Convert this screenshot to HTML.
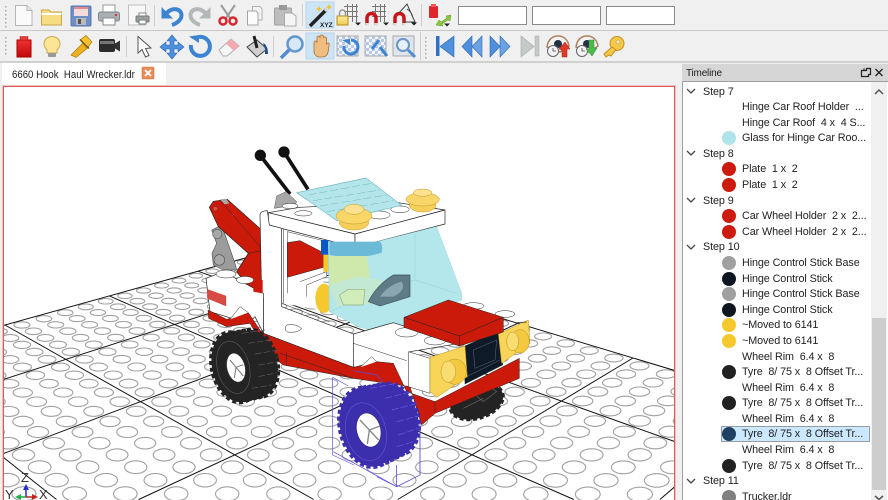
<!DOCTYPE html>
<html><head><meta charset="utf-8">
<style>
html,body{margin:0;padding:0;width:888px;height:500px;overflow:hidden;background:#f0f0f0;font-family:"Liberation Sans",sans-serif;color:#222}
.abs{position:absolute}
#wrap{position:absolute;left:0;top:0;width:888px;height:500px;overflow:hidden}
.inp{position:absolute;top:6px;height:17px;width:67px;background:#fff;border:1px solid #8a8a8a}
.row{position:absolute;left:742px;font-size:10.8px;letter-spacing:-.1px;line-height:14px;white-space:pre;height:14px;color:#222}
.st{position:absolute;left:703px;font-size:10.8px;letter-spacing:-.1px;line-height:14px;white-space:pre;color:#222}
.dot{position:absolute;left:722px;width:14px;height:14px;border-radius:50%}
</style></head>
<body>
<div id="wrap">
<div class="abs" style="left:0;top:30px;width:888px;height:1px;background:#c8c8c8"></div>
<div class="abs" style="left:0;top:61px;width:888px;height:2px;background:#d0d0d0"></div>
<div class="inp" style="left:458px"></div>
<div class="inp" style="left:532px"></div>
<div class="inp" style="left:606px"></div>

<!-- tab -->
<div class="abs" style="left:2px;top:63px;width:164px;height:22px;background:#fff"></div>
<div class="abs" style="left:12px;top:68px;font-size:11.4px;line-height:14px;white-space:pre;color:#222;transform:scaleX(.845);transform-origin:0 0">6660 Hook  Haul Wrecker.ldr</div>

<!-- viewport -->
<div class="abs" style="left:3px;top:86px;width:670px;height:414px;background:#fff;border:1px solid #e4555c;border-bottom:none;box-shadow:0 0 0 1px rgba(232,110,116,.35)"></div>

<svg class="abs" style="left:0;top:0;display:block" width="888" height="500" viewBox="0 0 888 500">
<defs>
<clipPath id="vp"><rect x="4" y="87" width="670" height="413"/></clipPath>
<linearGradient id="gR" x1="0" y1="0" x2="0" y2="1"><stop offset="0" stop-color="#ee3030"/><stop offset="1" stop-color="#c00808"/></linearGradient>
<linearGradient id="gY" x1="0" y1="0" x2="0" y2="1"><stop offset="0" stop-color="#fbe9a0"/><stop offset="1" stop-color="#f2cc50"/></linearGradient>
<pattern id="chk" width="6" height="6" patternUnits="userSpaceOnUse"><rect width="6" height="6" fill="#f2f5fb"/><rect width="3" height="3" fill="#b8c8ea"/><rect x="3" y="3" width="3" height="3" fill="#b8c8ea"/></pattern>
</defs>

<!-- handles -->
<g fill="#aaa"><rect x="5" y="6" width="1.5" height="1.5"/><rect x="5" y="10" width="1.5" height="1.5"/><rect x="5" y="14" width="1.5" height="1.5"/><rect x="5" y="18" width="1.5" height="1.5"/><rect x="5" y="22" width="1.5" height="1.5"/><rect x="5" y="26" width="1.5" height="1.5"/>
<rect x="5" y="37" width="1.5" height="1.5"/><rect x="5" y="41" width="1.5" height="1.5"/><rect x="5" y="45" width="1.5" height="1.5"/><rect x="5" y="49" width="1.5" height="1.5"/><rect x="5" y="53" width="1.5" height="1.5"/>
<rect x="425" y="37" width="1.5" height="1.5"/><rect x="425" y="41" width="1.5" height="1.5"/><rect x="425" y="45" width="1.5" height="1.5"/><rect x="425" y="49" width="1.5" height="1.5"/><rect x="425" y="53" width="1.5" height="1.5"/><rect x="425" y="57" width="1.5" height="1.5"/></g>
<!-- separators -->
<g fill="#cfcfcf"><rect x="154" y="5" width="1" height="21"/><rect x="302" y="4" width="1" height="22"/><rect x="421" y="4" width="1" height="22"/><rect x="126" y="36" width="1" height="21"/><rect x="273" y="36" width="1" height="21"/><rect x="420" y="32" width="1" height="28"/></g>

<!-- ROW 1 -->
<path d="M15.5 5.5H27L32 10.5V25.5H15.5Z" fill="#fafafa" stroke="#b5b5b5"/><path d="M27 5.5V10.5H32" fill="#e5e5e5" stroke="#b5b5b5"/>
<path d="M41.5 25V10H49L51 12H61.5V25Z" fill="#f7dd82" stroke="#c9a648"/><path d="M41.5 14H61.5" stroke="#fff" stroke-width="2"/>
<rect x="71" y="6" width="20" height="20" rx="1" fill="#6c8fc8" stroke="#5376b0"/><rect x="74" y="7" width="14" height="9" fill="#f4dcdc"/><rect x="74" y="7" width="14" height="2" fill="#e88a8a"/><rect x="76" y="18" width="10" height="7" fill="#b9b9b9"/><rect x="78" y="19" width="3" height="5" fill="#555"/>
<rect x="103" y="5" width="12" height="8" fill="#fff" stroke="#999"/><rect x="98.5" y="12" width="21" height="9" rx="2" fill="#a9b0b4" stroke="#7e868a"/><rect x="103" y="18" width="12" height="7" fill="#fff" stroke="#888"/><rect x="115" y="14" width="2" height="2" fill="#d33"/>
<rect x="128.5" y="5" width="17" height="20" fill="#f7f7f7" stroke="#c0c0c0"/><rect x="139" y="13" width="7" height="4" fill="#fff" stroke="#888"/><rect x="136" y="16" width="13" height="6" rx="1" fill="#9a9fa2" stroke="#777"/><rect x="139" y="20" width="7" height="4" fill="#fff" stroke="#777"/>
<path d="M165 15C172 5 184 9 181 18 179 22 175 24 172 25" fill="none" stroke="#3c83d2" stroke-width="4"/><path d="M161.5 7V18.5H173Z" fill="#3c83d2"/>
<path d="M207 15C200 5 188 9 191 18 193 22 197 24 200 25" fill="none" stroke="#b3b7b7" stroke-width="4"/><path d="M210.5 7V18.5H199Z" fill="#b3b7b7"/>
<path d="M221 5L230 18M235 5L226 18" stroke="#9a9a9a" stroke-width="2"/><circle cx="223" cy="21" r="3.5" fill="none" stroke="#d8262a" stroke-width="2.5"/><circle cx="233" cy="21" r="3.5" fill="none" stroke="#d8262a" stroke-width="2.5"/>
<path d="M252.5 6.5H260L262 9V20H252.5Z" fill="#f2f2f2" stroke="#b0b0b0"/><path d="M247.5 11H256L258 13V25H247.5Z" fill="#fcfcfc" stroke="#a5a5a5"/>
<rect x="274.5" y="8" width="17" height="17" rx="1" fill="#bdbdbd" stroke="#a0a0a0"/><rect x="279" y="5" width="8" height="5" fill="#999"/><path d="M284.5 13H292L296 16V26H284.5Z" fill="#f5f5f5" stroke="#aaa"/>

<rect x="306" y="2" width="28" height="26" fill="#cde4f7" stroke="#b7d5ee"/>
<path d="M310 26L326 10" stroke="#222" stroke-width="3.5"/><path d="M325 11L328 8" stroke="#d8d8d8" stroke-width="3"/><path d="M319 6l1 2 2 1-2 1-1 2-1-2-2-1 2-1zM329 4l1 2 2 1-2 1-1 2-1-2-2-1 2-1z" fill="#f0c030"/>
<text x="320" y="27" font-size="6.5" font-weight="bold" fill="#222" font-family="Liberation Sans">XYZ</text>
<g stroke="#777" stroke-width="1" fill="none"><path d="M344 6.5H358M344 11.5H358M344 16.5H358M347.5 4V22M352.5 4V22M356.5 4V22"/><path d="M372 6.5H386M372 11.5H386M372 16.5H386M375.5 4V22M380.5 4V22M384.5 4V22"/></g>
<rect x="337" y="16" width="11" height="9" fill="url(#gY)" stroke="#b58f20"/><path d="M339.5 16V13A3 3 0 0 1 345.5 13V16" fill="none" stroke="#999" stroke-width="1.5"/>
<path d="M355 22.5h6l-3 3zM383 22.5h6l-3 3zM411 22.5h6l-3 3z" fill="#222"/>
<path d="M367 25V18A4.5 4.5 0 0 1 376 18V25" fill="none" stroke="#c8141a" stroke-width="3.5"/><path d="M365.5 23h3.5v2.5h-3.5zM374.5 23h3.5v2.5h-3.5z" fill="#ddd"/>
<path d="M395 25V18A4.5 4.5 0 0 1 404 18V25" fill="none" stroke="#c8141a" stroke-width="3.5"/><path d="M393.5 23h3.5v2.5h-3.5zM402.5 23h3.5v2.5h-3.5z" fill="#ddd"/>
<path d="M399 13L407 4 415 22H404M407 9Q412 12 413 18" fill="none" stroke="#444" stroke-width="1"/>
<rect x="429" y="6" width="9" height="12" rx="1" fill="#e0262c"/><rect x="431" y="4" width="5" height="3" fill="#f05a5a"/>
<path d="M436 25l3-5 2 2 6-4-1-2 5-1-1 6-2-1-6 4 1 2z" fill="#8cc63f" stroke="#5f9a1f" stroke-width=".5"/><path d="M444 23.5h6l-3 3z" fill="#222"/>

<!-- ROW 2 -->
<rect x="17" y="40" width="14" height="17" fill="url(#gR)" stroke="#a00"/><rect x="20" y="36.5" width="8" height="3.5" fill="#e83a3a" stroke="#a22" stroke-width=".5"/>
<path d="M47 50C42 46 43 37 52 36.5 61 37 62 46 57 50V53H47Z" fill="#fbe694" stroke="#c9a84c"/><rect x="48" y="53" width="8" height="4" rx="1" fill="#999"/>
<path d="M71 55L84 42 89 47 76 57.5Z" fill="#eeb020" stroke="#a87a10" stroke-width=".7"/><path d="M80 40L86 35.5 92 42 87 48Z" fill="#f4c030" stroke="#a87a10" stroke-width=".7"/><path d="M80 39.5l9 9" stroke="#6e5008" stroke-width="1.2"/>
<rect x="99" y="39" width="16" height="13" rx="2" fill="#2c2c2c"/><path d="M100 41h14v3H100z" fill="#777"/><path d="M115 43.5l5-3v11l-5-3z" fill="#333"/>
<path d="M138 36.5L138 53 142 49.5 145.5 57 149 55.5 145.5 48.5 151 48Z" fill="#fff" stroke="#555"/>
<path d="M172 35l5 6h-3v4h4v-3l6 5-6 5v-3h-4v4h3l-5 6-5-6h3v-4h-4v3l-6-5 6-5v3h4v-4h-3z" fill="#4f8fdc" stroke="#2a67b5" stroke-width=".6"/>
<path d="M191 45A9.5 9.5 0 1 0 199 37" fill="none" stroke="#3c83d2" stroke-width="4"/><path d="M189 36.5L199 35V43Z" fill="#3c83d2"/>
<path d="M219 50L231 39 239 46 227 56H223Z" fill="#f6f6f6" stroke="#b0b0b0"/><path d="M226 43.5L231 39 239 46 234 51Z" fill="#f4a8b0"/>
<path d="M247 47L257 40 267 49 257 57Z" fill="#d0d0d0" stroke="#444"/><path d="M254 36l3 12" stroke="#222" stroke-width="3"/><path d="M263 43c3 1 5 5 5 11h-3v-5z" fill="#1e4f8f"/>
<circle cx="295" cy="44" r="7.5" fill="#d7e8f8" stroke="#5f96cf" stroke-width="2.5"/><path d="M289 50L281 58" stroke="#4f8cd0" stroke-width="3.5"/>
<rect x="306" y="33" width="28" height="26" fill="#cde4f7" stroke="#b7d5ee"/>
<path d="M314 50V43q0-2 1.5-2t1.5 2V38q0-2 1.5-2t1.5 2v-1q0-2 1.8-2t1.8 2v1q0-1 1.5-1t1.5 2v6q0-2 1.5-2t1 2l-1 7q-1 5-6 5h-3q-3 0-5-4z" fill="#f0bd80" stroke="#a97236" stroke-width=".8"/>
<rect x="337" y="36" width="21" height="20" fill="url(#chk)" stroke="#aaa"/><path d="M344 46A7 7 0 1 0 351 40" fill="none" stroke="#3c83d2" stroke-width="3"/><path d="M342 40l8-1v6z" fill="#3c83d2"/>
<rect x="365" y="36" width="21" height="20" fill="url(#chk)" stroke="#aaa"/><path d="M372 49l7-9M380 47l7 9" stroke="#3c83d2" stroke-width="3"/>
<rect x="393" y="36" width="21" height="20" fill="#dfe5ec" stroke="#aaa"/><circle cx="403" cy="45" r="6" fill="#e5f0fa" stroke="#6b96c6" stroke-width="2"/><path d="M408 50l7 7" stroke="#4f8cd0" stroke-width="3"/>

<rect x="436" y="36" width="3.5" height="20" fill="#2f6fc6"/><path d="M454 36V57L440 46.5Z" fill="#4f8fdc" stroke="#2a67b5" stroke-width=".6"/>
<path d="M472 36V57L462 46.5Z" fill="#4f8fdc" stroke="#2a67b5" stroke-width=".6"/><path d="M482 36V57L472 46.5Z" fill="#6aa2e4" stroke="#2a67b5" stroke-width=".6"/>
<path d="M490 36V57L500 46.5Z" fill="#4f8fdc" stroke="#2a67b5" stroke-width=".6"/><path d="M500 36V57L510 46.5Z" fill="#6aa2e4" stroke="#2a67b5" stroke-width=".6"/>
<path d="M521 36V57L534 46.5Z" fill="#c5c9c9" stroke="#a5a9a9" stroke-width=".6"/><rect x="535" y="36" width="4" height="20" fill="#c5c9c9" stroke="#a5a9a9" stroke-width=".5"/>

<path d="M547 47C548 39 553 36 558 36 564 36 568 40 569 46L560 52Z" fill="#f4f4f4" stroke="#b08060" stroke-width="1.5"/><circle cx="558" cy="44" r="4" fill="#234"/><circle cx="553" cy="51" r="5.5" fill="#f5f5f5" stroke="#666"/><path d="M553 48v3h3" stroke="#444" fill="none" stroke-width=".8"/><path d="M565 42l5 7h-3v8h-5v-7l-3-1z" fill="#e23a28" stroke="#a81a10" stroke-width=".5"/>
<path d="M576 47C577 39 582 36 587 36 593 36 597 40 598 46L589 52Z" fill="#f4f4f4" stroke="#b08060" stroke-width="1.5"/><circle cx="587" cy="44" r="4" fill="#234"/><circle cx="582" cy="51" r="5.5" fill="#f5f5f5" stroke="#666"/><path d="M582 48v3h3" stroke="#444" fill="none" stroke-width=".8"/><path d="M589 40h5v8h3l-5 8-6-7h3z" fill="#4dbb4a" stroke="#2f8a2f" stroke-width=".5"/>
<circle cx="617" cy="43.5" r="7" fill="#f5c948" stroke="#c28f22"/><circle cx="618" cy="42" r="2" fill="#f7ecc0" stroke="#c28f22" stroke-width=".6"/><path d="M612 47L604 54 606 57 609 55 611 56 614 52 616 50Z" fill="#f5c948" stroke="#c28f22"/>

<!-- close tab -->
<rect x="142" y="67" width="12" height="12" rx="1.5" fill="#ea8a58" stroke="#d8703a" stroke-width=".6"/><path d="M145 70l6 6m0-6l-6 6" stroke="#fff" stroke-width="1.8"/>

<!-- VIEWPORT -->
<g clip-path="url(#vp)">
<g id="floor"></g>
<g id="lines" stroke="#111" stroke-width="1" fill="none"></g>

<g transform="translate(180 130) scale(.33333)" stroke-linejoin="round">
<!-- far wheel -->
<ellipse cx="890" cy="815" rx="82" ry="50" transform="rotate(-18 890 815)" fill="#232323" stroke="#232323" stroke-width="10" stroke-dasharray="12 8"/>
<path d="M880 790l40-25 30 20-40 30zM850 835l60-30" stroke="#666" stroke-width="2" fill="none"/>
<!-- hinge gray -->
<path d="M95 300L125 285 165 400 170 420 130 420 100 405 96 370 110 340Z" fill="#9c9c9c" stroke="#555" stroke-width="2"/>
<circle cx="112" cy="312" r="14" fill="#a8a8a8" stroke="#555" stroke-width="2"/><circle cx="118" cy="390" r="16" fill="#a8a8a8" stroke="#555" stroke-width="2"/>
<!-- boom -->
<path d="M88 232L100 214 142 208 245 300V470L220 490 170 425 205 370 115 290Z" fill="#cc1a0a" stroke="#222" stroke-width="2"/>
<path d="M122 212L240 350M170 425L205 370 245 362" fill="none" stroke="#222" stroke-width="1.5"/>
<circle cx="106" cy="236" r="7" fill="#e05040" stroke="#222" stroke-width="1"/>
<path d="M120 208l18-2 10 14-14 3z" fill="#aaa"/>
<!-- sticks -->
<path d="M242 78L330 192M312 66L384 178" stroke="#111" stroke-width="11"/>
<circle cx="241" cy="76" r="17" fill="#111"/><circle cx="312" cy="66" r="17" fill="#111"/>
<path d="M283 235L290 198 318 185 350 215 345 225Z" fill="#a8a8a8" stroke="#555" stroke-width="1.5"/>
<!-- window interior -->
<path d="M305 290L430 325V540L305 520Z" fill="#fff"/>
<path d="M322 338L360 332 430 368V412L322 442Z" fill="#cc1a0a" stroke="#222" stroke-width="1.5"/>
<path d="M322 305L430 332M322 305V490M360 455L440 425 440 440 380 465M380 465V500" stroke="#333" stroke-width="1.5" fill="#fff"/>
<!-- roof -->
<path d="M265 248L360 232 655 218 795 240 525 312Z" fill="#fff" stroke="#222" stroke-width="2"/>
<path d="M265 248L525 312V352L265 285Z" fill="#fff" stroke="#222" stroke-width="2"/>
<path d="M525 312L795 240V282L525 352Z" fill="#fff" stroke="#222" stroke-width="2"/>
<g fill="#fff" stroke="#222" stroke-width="1.5"><ellipse cx="598" cy="255" rx="32" ry="12"/><ellipse cx="660" cy="238" rx="28" ry="10"/><ellipse cx="330" cy="228" rx="24" ry="8"/><ellipse cx="370" cy="250" rx="26" ry="8"/></g>
<!-- glass top -->
<path d="M350 188L558 144 665 226 470 272 400 222Z" fill="#b4e5ea" stroke="#6fb7c0" stroke-width="2"/>
<path d="M385 195L575 160M400 212L600 180M420 228L620 195M440 245L640 212" stroke="#6fb7c0" stroke-width="1.5" fill="none" stroke-dasharray="25 8"/>
<!-- gold studs -->
<g stroke="#c49a28" stroke-width="1.5">
<ellipse cx="522" cy="278" rx="44" ry="22" fill="#f6cf5a"/>
<ellipse cx="522" cy="258" rx="54" ry="24" fill="#f8d768"/>
<ellipse cx="522" cy="238" rx="30" ry="15" fill="#fbe190"/>
<ellipse cx="728" cy="226" rx="40" ry="20" fill="#f6cf5a"/>
<ellipse cx="728" cy="208" rx="50" ry="20" fill="#f8d768"/>
<ellipse cx="728" cy="188" rx="28" ry="11" fill="#fbe190"/>
</g>
<!-- pillar + body -->
<path d="M240 255Q240 243 262 242L268 285 305 295V530L520 612V712L250 610V505L245 500Z" fill="#fff" stroke="#222" stroke-width="2"/>
<path d="M310 298V522M305 520L448 575" stroke="#222" stroke-width="1.5" fill="none"/>
<path d="M320 585Q350 580 365 596 352 610 322 606Q310 598 320 585Z" fill="#fff" stroke="#222" stroke-width="1.5"/>
<!-- rear bed -->
<path d="M78 445L130 425 250 490V610L225 560 205 580 90 545Z" fill="#fff" stroke="#222" stroke-width="2"/>
<path d="M82 478L138 498V528L82 505Z" fill="#d84a44" stroke="#b33" stroke-width="1"/>
<path d="M84 540L140 568 205 548 240 600 250 612V650L210 580 140 590 86 565Z" fill="#cc1a0a" stroke="#222" stroke-width="1.5"/>
<path d="M150 568L180 530 205 548" fill="#fff" stroke="#222" stroke-width="1.5"/>
<g fill="#fff" stroke="#222" stroke-width="1.5"><ellipse cx="138" cy="432" rx="30" ry="12"/><ellipse cx="195" cy="450" rx="26" ry="11"/></g>
<path d="M220 450H248V490L220 485Z" fill="#cc1a0a"/>
<!-- seat area / driver -->
<ellipse cx="432" cy="505" rx="26" ry="44" fill="#f5c92e"/>
<path d="M430 372H446V425H430Z" fill="#f5c92e"/>
<rect x="423" y="330" width="23" height="44" fill="#0b57c4"/>
<!-- glass cabin -->
<path d="M445 335L525 352 770 290 845 490V510L690 565 640 618 540 592 448 545Z" fill="#b4e7eb" stroke="#9ad8de" stroke-width="1.5"/>
<path d="M705 310V450L830 490M705 450L560 495M450 545L560 495" stroke="#96d6dc" stroke-width="2" fill="none"/>
<path d="M448 335H600Q610 345 605 368 540 390 448 375Z" fill="#6bbad8"/>
<path d="M450 378H560L570 440 530 470 450 465Z" fill="#cfe9ad"/>
<path d="M450 465L530 440 610 450 580 520 470 530Z" fill="#c4e9d2"/>
<path d="M478 495L505 478H555L550 525H490Z" fill="#d0ecb8" stroke="#8faf88" stroke-width="2"/>
<path d="M565 515Q590 465 640 435L690 435 690 500 600 528Z" fill="#5f7b86" stroke="#3a525c" stroke-width="2"/>
<path d="M600 500Q625 465 665 455 680 480 640 500Z" fill="#8aa6b0"/>
<!-- hood -->
<path d="M520 612L640 578 840 640 690 665 685 790 520 710Z" fill="#fff" stroke="#222" stroke-width="2"/>
<path d="M520 640L680 692" stroke="#222" stroke-width="1.5"/>
<g fill="#fff" stroke="#222" stroke-width="1.5"><ellipse cx="680" cy="607" rx="34" ry="14"/><ellipse cx="765" cy="632" rx="32" ry="13"/><ellipse cx="880" cy="528" rx="32" ry="10"/><ellipse cx="975" cy="552" rx="30" ry="10"/></g>
<!-- lower red -->
<path d="M250 610L520 712 590 695 640 700 680 785 765 815 1018 685V745L765 850 725 885 690 770 520 745 310 705 250 660Z" fill="#cc1a0a" stroke="#222" stroke-width="1.5"/>
<path d="M300 670L520 745M320 668V705M765 815V850M540 712L575 680 590 695" stroke="#222" stroke-width="1.5" fill="#fff"/>
<path d="M685 665L750 685V790L685 770Z" fill="#fff" stroke="#222" stroke-width="1.5"/>
<!-- grille -->
<path d="M850 650L968 598V705L855 762Z" fill="#0e1a28" stroke="#111"/>
<path d="M880 660L950 630 945 690 885 715ZM860 740L960 690" stroke="#5c6b78" stroke-width="1.5" fill="none"/>
<!-- yellow lamps -->
<path d="M750 682L855 648 862 740 770 802 750 785Z" fill="#f8d458" stroke="#b89020" stroke-width="1.5"/>
<ellipse cx="825" cy="725" rx="34" ry="38" fill="#f4c93f" stroke="#b89020" stroke-width="1.5"/><ellipse cx="805" cy="725" rx="22" ry="32" fill="#f9dc72" stroke="#b89020" stroke-width="1.5"/>
<path d="M955 612L1045 570 1050 640 965 700Z" fill="#f8d458" stroke="#b89020" stroke-width="1.5"/>
<ellipse cx="1020" cy="634" rx="28" ry="35" fill="#f4c93f" stroke="#b89020" stroke-width="1.5"/><ellipse cx="998" cy="634" rx="18" ry="28" fill="#f9dc72" stroke="#b89020" stroke-width="1.5"/>
<path d="M1012 578l28-2" stroke="#333" stroke-width="2.5"/>
<!-- red plate -->
<path d="M672 562L805 510 970 562 838 618Z" fill="#cc1a0a" stroke="#222" stroke-width="1.5"/>
<path d="M672 562L838 618V648L672 592Z" fill="#cc1a0a" stroke="#222" stroke-width="1.5"/>
<path d="M838 618L970 562V606L838 648Z" fill="#cc1a0a" stroke="#222" stroke-width="1.5"/>

<!-- rear wheel -->
<g fill="#242424" stroke="#242424" stroke-width="14" stroke-dasharray="12 8">
<ellipse cx="225" cy="700" rx="66" ry="102" transform="rotate(-14 225 700)"/>
<ellipse cx="210" cy="703" rx="66" ry="102" transform="rotate(-14 210 703)"/>
<ellipse cx="195" cy="706" rx="66" ry="102" transform="rotate(-14 195 706)"/>
<ellipse cx="180" cy="709" rx="66" ry="102" transform="rotate(-14 180 709)"/>
<ellipse cx="165" cy="712" rx="68" ry="106" transform="rotate(-14 165 712)"/>
</g>
<path d="M185 610L255 600M205 640L285 628M225 672L295 660M235 705L295 695M235 740L290 728M215 775L275 765" stroke="#5a5a5a" stroke-width="2" stroke-dasharray="20 6" fill="none"/>
<ellipse cx="160" cy="712" rx="48" ry="80" transform="rotate(-14 160 712)" fill="none" stroke="#666" stroke-width="1.5"/>
<ellipse cx="168" cy="713" rx="27" ry="44" transform="rotate(-14 168 713)" fill="#fff" stroke="#444" stroke-width="1.5"/>
<path d="M150 690l18 22 22-8M168 712l-5 32M168 712l22 26" stroke="#777" stroke-width="3" fill="none"/>

<!-- front wheel (selected) -->
<g fill="none" stroke="#5a4be0" stroke-width="2">
<path d="M458 742V975L522 1005M458 742L505 768M520 722L590 735 720 880V960M650 1005V1070L460 965M720 960V1035L650 1070"/>
</g>
<g fill="#3c2fad" stroke="#3c2fad" stroke-width="14" stroke-dasharray="12 8">
<ellipse cx="640" cy="868" rx="74" ry="108" transform="rotate(-14 640 868)"/>
<ellipse cx="621" cy="874" rx="76" ry="111" transform="rotate(-14 621 874)"/>
<ellipse cx="602" cy="880" rx="78" ry="114" transform="rotate(-14 602 880)"/>
<ellipse cx="583" cy="886" rx="80" ry="117" transform="rotate(-14 583 886)"/>
<ellipse cx="563" cy="892" rx="82" ry="120" transform="rotate(-14 563 892)"/>
</g>
<path d="M570 775L650 760M615 805L695 785M635 840L712 820M650 875L715 858M655 915L715 895M650 950L700 935" stroke="#6a5ce8" stroke-width="2" stroke-dasharray="22 6" fill="none"/>
<ellipse cx="558" cy="905" rx="60" ry="88" transform="rotate(-14 558 905)" fill="none" stroke="#6a5ce8" stroke-width="1.5"/>
<ellipse cx="566" cy="900" rx="36" ry="52" transform="rotate(-14 566 900)" fill="#fff" stroke="#2a2080" stroke-width="2"/>
<path d="M540 870l28 30 32-12M568 900l-6 42M568 900l28 30" stroke="#888" stroke-width="4" fill="none"/>
<g fill="none" stroke="#5a4be0" stroke-width="2"><path d="M650 1005V1070M720 960V1035L650 1070 590 1040M720 880V960"/></g>
</g>

<!-- axes -->
<g font-family="Liberation Sans" font-size="13" fill="#333">
<text x="21" y="482">Z</text><text x="5" y="499">Y</text><text x="39" y="499">X</text></g>
<path d="M26 497V488" stroke="#2030d0" stroke-width="1.5"/><path d="M26 484l3 6h-6z" fill="#2030d0"/>
<path d="M26 497H33" stroke="#c02020" stroke-width="1.5"/><path d="M38 497l-6-3v6z" fill="#c82020"/>
<path d="M26 497H20" stroke="#20a040" stroke-width="1.5"/><path d="M15 497l6-3v6z" fill="#20b050"/>
</g>

<!-- timeline header icons -->
<rect x="682" y="64" width="206" height="17" fill="#d6d6d6"/>
<rect x="682" y="81" width="206" height="419" fill="#a0a0a0"/>
<rect x="683" y="82" width="205" height="418" fill="#fff"/>
<rect x="871" y="82" width="16" height="418" fill="#f0f0f0"/>
<rect x="872" y="318" width="14" height="172" fill="#cdcdcd"/>
<path d="M875 94l4-4 4 4M875 496l4 3.5 4-3.5" fill="none" stroke="#555" stroke-width="1.5"/>
<path d="M861.5 70.5h5v-2h4v6h-2v2h-7zM864 70.5v-2" fill="none" stroke="#222" stroke-width="1.2"/>
<path d="M875.5 69l7 7m0-7l-7 7" stroke="#222" stroke-width="1.3"/>
<!-- selection -->
<rect x="721.5" y="426.5" width="148" height="15" fill="#cce8ff" stroke="#444" stroke-width="1" stroke-dasharray="1 1"/>
<!-- chevrons -->
<g fill="none" stroke="#444" stroke-width="1.3">
<path d="M687 89l4 4 4-4M687 151l4 4 4-4M687 198l4 4 4-4M687 245l4 4 4-4M687 479l4 4 4-4"/>
</g>
</svg>

<div class="abs" style="left:686px;top:67px;font-size:10px;letter-spacing:-.2px;line-height:13px;color:#222">Timeline</div>

<div class="st" style="top:85px">Step 7</div>
<div class="row" style="top:100px">Hinge Car Roof Holder  ...</div>
<div class="row" style="top:116px">Hinge Car Roof  4 x  4 S...</div>
<div class="dot" style="top:131px;background:#aee3ea"></div><div class="row" style="top:131px">Glass for Hinge Car Roo...</div>
<div class="st" style="top:147px">Step 8</div>
<div class="dot" style="top:162px;background:#cc1a0e"></div><div class="row" style="top:162px">Plate  1 x  2</div>
<div class="dot" style="top:178px;background:#cc1a0e"></div><div class="row" style="top:178px">Plate  1 x  2</div>
<div class="st" style="top:194px">Step 9</div>
<div class="dot" style="top:209px;background:#cc1a0e"></div><div class="row" style="top:209px">Car Wheel Holder  2 x  2...</div>
<div class="dot" style="top:225px;background:#cc1a0e"></div><div class="row" style="top:225px">Car Wheel Holder  2 x  2...</div>
<div class="st" style="top:240px">Step 10</div>
<div class="dot" style="top:256px;background:#a0a0a0"></div><div class="row" style="top:256px">Hinge Control Stick Base</div>
<div class="dot" style="top:272px;background:#0e1620"></div><div class="row" style="top:272px">Hinge Control Stick</div>
<div class="dot" style="top:287px;background:#a0a0a0"></div><div class="row" style="top:287px">Hinge Control Stick Base</div>
<div class="dot" style="top:303px;background:#0e1620"></div><div class="row" style="top:303px">Hinge Control Stick</div>
<div class="dot" style="top:318px;background:#f5c92e"></div><div class="row" style="top:318px">~Moved to 6141</div>
<div class="dot" style="top:334px;background:#f5c92e"></div><div class="row" style="top:334px">~Moved to 6141</div>
<div class="row" style="top:350px">Wheel Rim  6.4 x  8</div>
<div class="dot" style="top:365px;background:#222"></div><div class="row" style="top:365px">Tyre  8/ 75 x  8 Offset Tr...</div>
<div class="row" style="top:381px">Wheel Rim  6.4 x  8</div>
<div class="dot" style="top:396px;background:#222"></div><div class="row" style="top:396px">Tyre  8/ 75 x  8 Offset Tr...</div>
<div class="row" style="top:412px">Wheel Rim  6.4 x  8</div>
<div class="dot" style="top:427px;background:#1f4060"></div><div class="row" style="top:427px">Tyre  8/ 75 x  8 Offset Tr...</div>
<div class="row" style="top:443px">Wheel Rim  6.4 x  8</div>
<div class="dot" style="top:459px;background:#222"></div><div class="row" style="top:459px">Tyre  8/ 75 x  8 Offset Tr...</div>
<div class="st" style="top:474px">Step 11</div>
<div class="dot" style="top:490px;height:10px;border-radius:7px 7px 2px 2px;background:#808080"></div><div class="row" style="top:490px;height:10px;overflow:hidden">Trucker.ldr</div>
</div>

<script>
(function(){
var p=[[5,325],[274,250],[633,358],[357,524]];
var x0=p[0][0],y0=p[0][1],x1=p[1][0],y1=p[1][1],x2=p[2][0],y2=p[2][1],x3=p[3][0],y3=p[3][1];
var dx1=x1-x2,dx2=x3-x2,sx=x0-x1+x2-x3,dy1=y1-y2,dy2=y3-y2,sy=y0-y1+y2-y3;
var den=dx1*dy2-dx2*dy1,g=(sx*dy2-dx2*sy)/den,h=(dx1*sy-sx*dy1)/den;
var a=x1-x0+g*x1,b=x3-x0+h*x3,c=x0,d=y1-y0+g*y1,e=y3-y0+h*y3,f=y0;
function P(u,v){var s=u/3,t=v/4,w=g*s+h*t+1;return [(a*s+b*t+c)/w,(d*s+e*t+f)/w];}
function clip(A,B){
  var t0=0,t1=1,dx=B[0]-A[0],dy=B[1]-A[1];
  var tests=[[-dx,A[0]-0],[dx,676-A[0]],[-dy,A[1]-0],[dy,499.5-A[1]]];
  for(var n=0;n<4;n++){var pp=tests[n][0],qq=tests[n][1];
    if(pp===0){if(qq<0)return '';continue;}
    var rr=qq/pp;
    if(pp<0){if(rr>t1)return '';if(rr>t0)t0=rr;}else{if(rr<t0)return '';if(rr<t1)t1=rr;}
  }
  return 'M'+(A[0]+t0*dx).toFixed(1)+' '+(A[1]+t0*dy).toFixed(1)+'L'+(A[0]+t1*dx).toFixed(1)+' '+(A[1]+t1*dy).toFixed(1);
}
var s1='';
for(var i=-15;i<15;i++){for(var j=0;j<35;j++){
var cu=(i+.5)/5,cv=(j+.5)/5,q=P(cu,cv);
if(q[0]<-20||q[0]>700||q[1]>515||q[1]<80)continue;
var pu=P(cu+.1,cv),pv=P(cu,cv+.1);
var xu=(pu[0]-q[0])*10,yu=(pu[1]-q[1])*10,xv=(pv[0]-q[0])*10,yv=(pv[1]-q[1])*10;
var rx=.065*Math.sqrt(xu*xu+xv*xv),ry=.072*Math.sqrt(yu*yu+yv*yv);
var pth='';
for(var k=0;k<18;k++){var A=k/18*2*Math.PI,mx=q[0]+rx*Math.cos(A),my=q[1]+ry*Math.sin(A);
pth+=(k?'L':'M')+Math.max(0,Math.min(mx,680)).toFixed(1)+' '+Math.min(my,500.6).toFixed(1);}
s1+=pth+'Z';
}}
document.getElementById('floor').innerHTML='<path d="'+s1+'" fill="#fff" stroke="#a0a0a0" stroke-width="1.1"/>';
var s2='';
for(var u=-1;u<=3;u++){s2+=clip(P(u,0),P(u,7));}
for(var v=0;v<=5;v++){s2+=clip(P(-2,v),P(3,v));}
document.getElementById('lines').innerHTML='<path d="'+s2+'"/>';
})();
</script>
</body></html>
